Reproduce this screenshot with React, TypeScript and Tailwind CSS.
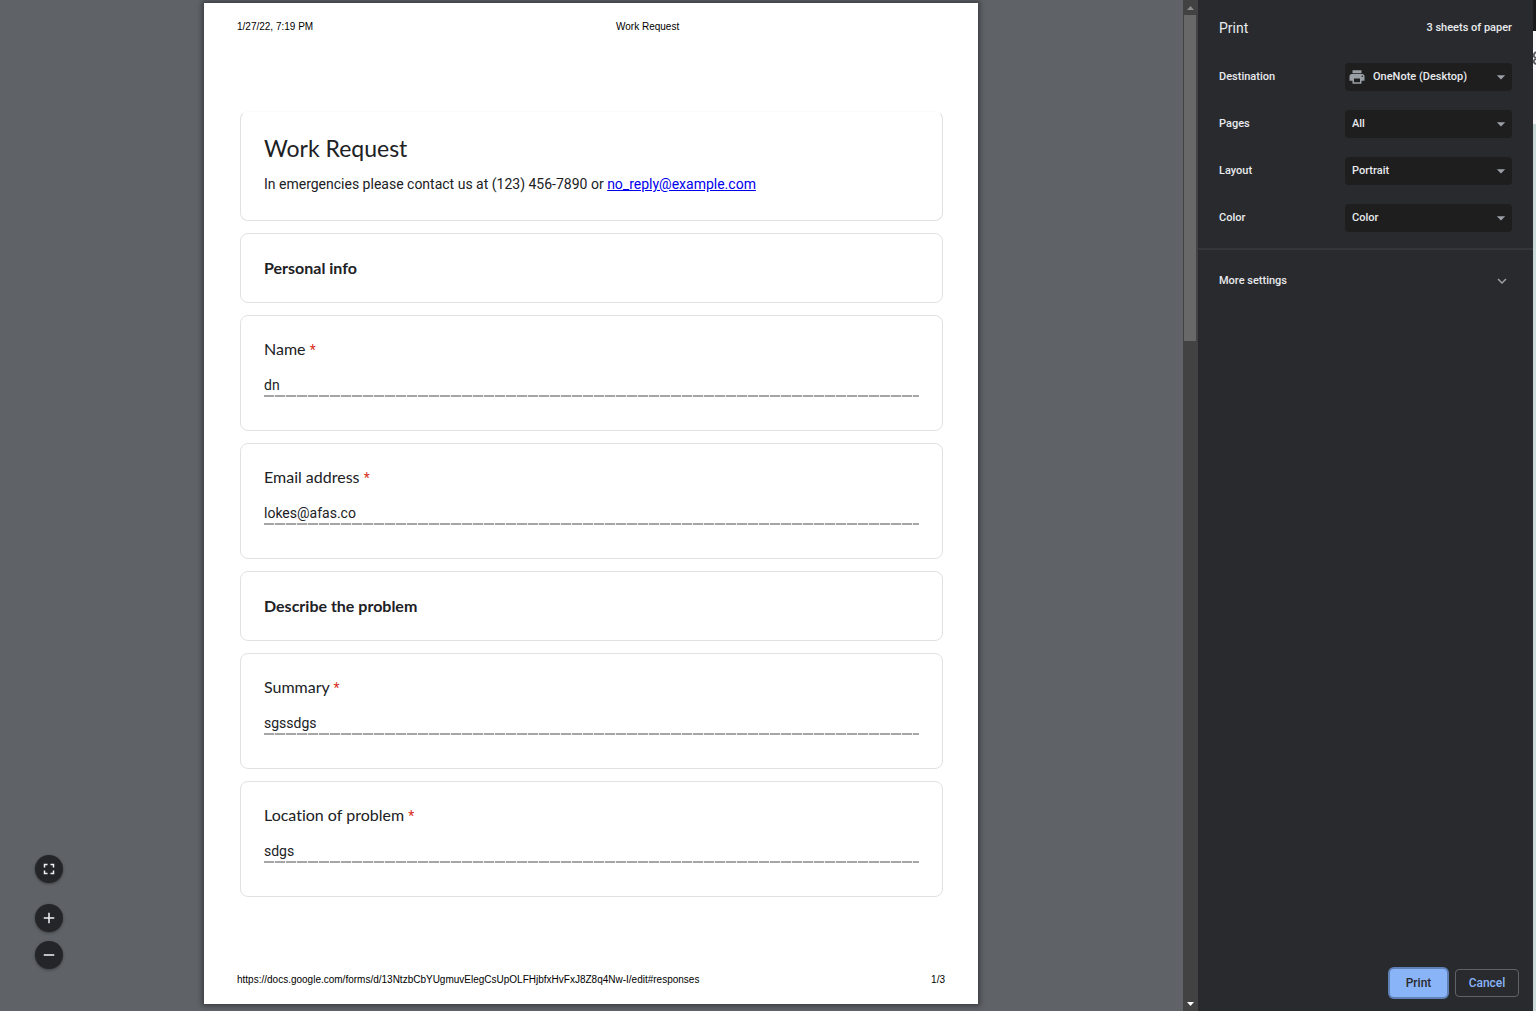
import React from "react";
import { MdAdd, MdArrowDropDown, MdExpandMore, MdFullscreen, MdPrint, MdRemove } from "react-icons/md";

const questions = {
  contact: [
    { id: "name", label: "Name", value: "dn" },
    { id: "email", label: "Email address", value: "lokes@afas.co" },
  ],
  problem: [
    { id: "summary", label: "Summary", value: "sgssdgs" },
    { id: "location", label: "Location of problem", value: "sdgs" },
  ],
};

const settings = [
  { id: "destination", label: "Destination", value: "OneNote (Desktop)", printer: true },
  { id: "pages", label: "Pages", value: "All" },
  { id: "layout", label: "Layout", value: "Portrait" },
  { id: "color", label: "Color", value: "Color" },
];

function SectionCard({ title }: { title: string }) {
  return (
    <section className="rounded-lg border border-[#e0e1e3] p-[23px]">
      <h2 className="font-['Lato','Roboto',sans-serif] text-base leading-[22px] font-bold">{title}</h2>
    </section>
  );
}

function QuestionCard({ id, label, value }: { id: string; label: string; value: string }) {
  return (
    <section className="rounded-lg border border-[#e0e1e3] px-[23px] pt-[23px] pb-[33px]">
      <label
        htmlFor={id}
        className="block font-['Lato','Roboto',sans-serif] text-base leading-5 [font-variant-ligatures:none]"
      >
        {label} <span className="font-['Roboto',sans-serif] text-sm leading-none text-[#d93025]">*</span>
      </label>
      <input
        id={id}
        readOnly
        defaultValue={value}
        className="mt-4 block h-5 w-full text-sm leading-5 outline-none"
      />
      <div className="h-[2px] bg-[repeating-linear-gradient(90deg,#a6a6a6_0_10px,#ededed_10px_11px)]" />
    </section>
  );
}

function Paper() {
  return (
    <article className="w-[774px] shrink-0 bg-white pt-4 pb-4 text-[#202124] shadow-[0_0_5px_2px_rgba(0,0,0,0.4)]">
      <header className="flex pl-[33px] font-['Liberation_Sans',sans-serif] text-[10px] leading-4 text-black">
        <span>1/27/22, 7:19 PM</span>
        <span className="flex-1 pl-1 text-center">Work Request</span>
      </header>

      <div className="mt-[76px] mr-[35px] ml-9 flex flex-col gap-3">
        <section className="rounded-lg border border-[#e0e1e3] border-t-[#fafafa] px-[23px] pt-5 pb-[26px]">
          <h1 className="font-['Lato','Roboto',sans-serif] text-[23px] leading-8">Work Request</h1>
          <p className="mt-[10px] text-sm leading-5">
            In emergencies please contact us at (123) 456-7890 or{" "}
            <a href="mailto:no_reply@example.com" className="text-[#0000ee] underline">
              no_reply@example.com
            </a>
          </p>
        </section>
        <SectionCard title="Personal info" />
        {questions.contact.map((q) => (
          <QuestionCard key={q.id} {...q} />
        ))}
        <SectionCard title="Describe the problem" />
        {questions.problem.map((q) => (
          <QuestionCard key={q.id} {...q} />
        ))}
      </div>

      <footer className="mt-[75px] flex justify-between px-[33px] font-['Liberation_Sans',sans-serif] text-[10px] leading-4 text-black">
        <span>https://docs.google.com/forms/d/13NtzbCbYUgmuvElegCsUpOLFHjbfxHvFxJ8Z8q4Nw-I/edit#responses</span>
        <span>1/3</span>
      </footer>
    </article>
  );
}

function ZoomButton({ label, children }: { label: string; children: React.ReactNode }) {
  return (
    <button
      aria-label={label}
      className="flex size-7 items-center justify-center rounded-full bg-[#242528] text-[#f1f3f4] shadow-[0_1px_3px_rgba(0,0,0,0.4)]"
    >
      {children}
    </button>
  );
}

function Scrollbar() {
  return (
    <div className="flex w-[15px] flex-col items-center bg-[#424242] pr-px">
      <div className="flex h-[15px] items-center">
        <svg width="7" height="4" viewBox="0 0 7 4" fill="#8b8b8b">
          <path d="M0 4 3.5 0 7 4z" />
        </svg>
      </div>
      <div className="h-[326px] w-3 bg-[#686868]" />
      <div className="mt-auto flex h-[15px] items-center">
        <svg width="7" height="4" viewBox="0 0 7 4" fill="#ffffff">
          <path d="M0 0h7L3.5 4z" />
        </svg>
      </div>
    </div>
  );
}

function Sidebar() {
  return (
    <aside className="flex w-[335px] shrink-0 flex-col bg-[#292a2d] text-[11px] font-medium text-[#e8eaed]">
      <div className="flex items-center justify-between pt-[18px] pr-[21px] pl-[21px] leading-5">
        <h2 className="text-sm leading-5 font-normal">Print</h2>
        <span>3 sheets of paper</span>
      </div>

      <div className="flex flex-col gap-[19px] border-b-2 border-[#35363a] px-[21px] pt-[25px] pb-4">
        {settings.map((s) => (
          <div key={s.id} className="flex items-center justify-between">
            <label htmlFor={s.id}>{s.label}</label>
            <div className="relative w-[167px]">
              <select
                id={s.id}
                className={
                  "block h-7 w-full appearance-none rounded bg-[#1e1e1f] pr-6 outline-none " +
                  (s.printer ? "pl-7" : "pl-[7px]")
                }
              >
                <option>{s.value}</option>
              </select>
              {s.printer && <MdPrint size={18} className="pointer-events-none absolute top-[5px] left-[3px] text-[#9aa0a6]" />}
              <MdArrowDropDown size={20} className="pointer-events-none absolute top-1 right-[1px] text-[#9aa0a6]" />
            </div>
          </div>
        ))}
      </div>

      <button className="mt-[19px] flex h-6 items-center justify-between pr-[22px] pl-[21px]">
        More settings
        <MdExpandMore size={18} className="text-[#9aa0a6]" />
      </button>

      <div className="mt-auto flex justify-end gap-2 pr-[14px] pb-[14px] text-xs">
        <button className="h-7 w-[57px] rounded bg-[#8ab4f8] text-[#292a2d] ring-2 ring-[#5f81b8]">Print</button>
        <button className="h-7 w-16 rounded border border-[#5f6368] text-[#8ab4f8]">Cancel</button>
      </div>
    </aside>
  );
}

export default function App() {
  return (
    <div className="flex h-screen overflow-hidden bg-[#5f6368] font-['Roboto',sans-serif]">
      <main className="relative flex flex-1 items-start justify-center overflow-hidden pt-[3px] pr-px">
        <Paper />
        <div className="absolute bottom-[42px] left-[35px] flex flex-col">
          <ZoomButton label="Fit to page">
            <MdFullscreen size={18} />
          </ZoomButton>
          <div className="mt-[21px] flex flex-col gap-[9px]">
            <ZoomButton label="Zoom in">
              <MdAdd size={18} />
            </ZoomButton>
            <ZoomButton label="Zoom out">
              <MdRemove size={18} />
            </ZoomButton>
          </div>
        </div>
      </main>
      <Scrollbar />
      <Sidebar />
      {/* edge of the page behind the dialog */}
      <div className="flex w-[3px] shrink-0 flex-col">
        <div className="h-[31px] bg-[#1b1b1c]" />
        <div className="flex h-[93px] flex-col bg-[#f8f9fa] pt-5">
          <svg width="3" height="14" viewBox="0 0 3 14" fill="none" stroke="#5f6368" strokeWidth="2">
            <path d="M3 1C0 3 0 6 3 7M3 8C0 9 0 12 3 13" />
          </svg>
        </div>
        <div className="flex-1 bg-[#c9dad8]" />
      </div>
    </div>
  );
}
